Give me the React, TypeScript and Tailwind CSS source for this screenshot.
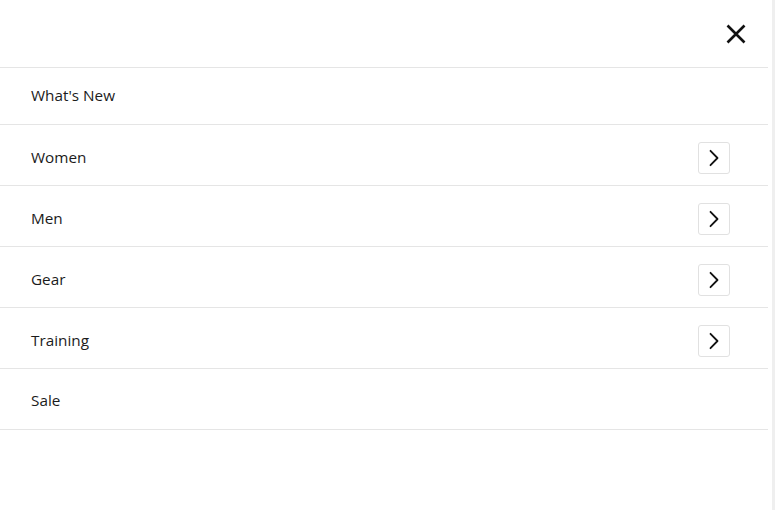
import React from "react";

const items: { label: string; arrow: boolean; h: string }[] = [
  { label: "What's New", arrow: false, h: "h-[57px]" },
  { label: "Women", arrow: true, h: "h-[61px] pt-[6px]" },
  { label: "Men", arrow: true, h: "h-[61px] pt-[6px]" },
  { label: "Gear", arrow: true, h: "h-[61px] pt-[6px]" },
  { label: "Training", arrow: true, h: "h-[61px] pt-[6px]" },
  { label: "Sale", arrow: false, h: "h-[61px] pt-[4px]" },
];

function Chevron() {
  return (
    <svg width="16" height="18" viewBox="0 0 16 18" fill="none">
      <path d="M4.5 1.8 L11.5 9 L4.5 16.2" stroke="#111" strokeWidth="1.8" strokeLinecap="round" strokeLinejoin="round" />
    </svg>
  );
}

export default function App() {
  return (
    <div
      className="flex h-[510px] w-[775px] bg-white text-[#1b1b1b]"
      style={{ fontFamily: '"Segoe UI", "Open Sans", "Noto Sans", sans-serif' }}
    >
      <div className="flex w-[768px] flex-col">
        <div className="flex h-[68px] items-center justify-end border-b border-[#e5e5e5] pr-[14px]">
          <button className="flex h-[36px] w-[36px] items-center justify-center">
            <svg width="20" height="20" viewBox="0 0 20 20" fill="none">
              <path d="M1.5 1.5 L18.5 18.5 M18.5 1.5 L1.5 18.5" stroke="#111" strokeWidth="2.6" strokeLinecap="butt" />
            </svg>
          </button>
        </div>
        {items.map((it) => (
          <div
            key={it.label}
            className={`flex items-center justify-between border-b border-[#e5e5e5] pl-[31px] pr-[38px] ${it.h}`}
          >
            <span className="text-[15.3px] leading-none">{it.label}</span>
            {it.arrow && (
              <span className="flex h-[32px] w-[32px] items-center justify-center rounded-[3px] border border-[#e1e1e1] bg-white">
                <Chevron />
              </span>
            )}
          </div>
        ))}
      </div>
      <div className="w-[4px]" />
      <div className="w-[3px] bg-[#efefef]" />
    </div>
  );
}
